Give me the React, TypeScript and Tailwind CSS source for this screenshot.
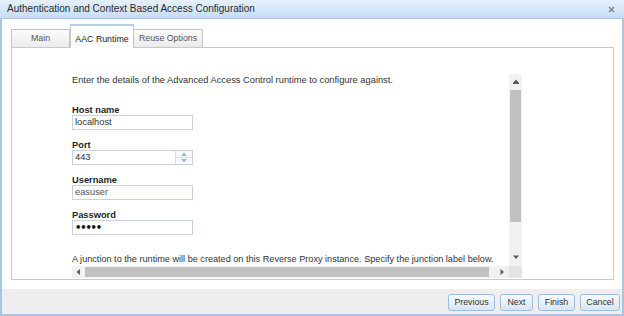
import { ReactNode } from 'react';

function Arrow({ dir }: { dir: 'up' | 'down' | 'left' | 'right' }) {
  const pts = {
    up: '1,5 4,1.5 7,5',
    down: '1,1.5 4,5 7,1.5',
    left: '5,1 1.5,4 5,7',
    right: '1.5,1 5,4 1.5,7',
  }[dir];
  return (
    <svg width="8" height="8" viewBox="0 0 8 8">
      <polygon points={pts} fill="#5a5a5a" />
      {dir === 'up' && <rect x="1" y="5" width="6" height="1" fill="#5a5a5a" />}
    </svg>
  );
}

function Field({ label, children }: { label: string; children: ReactNode }) {
  return (
    <div className="mt-[10px]">
      <div className="font-bold text-[#1f1f1f] leading-[10px] h-[10px]">{label}</div>
      {children}
    </div>
  );
}

function TextBox({ value, className = '' }: { value: string; className?: string }) {
  return (
    <div className={`w-[121px] h-[15px] border border-[#c9d1da] bg-white pl-[2px] leading-[13px] ${className}`}>
      {value}
    </div>
  );
}

function Btn({ label, w }: { label: string; w: string }) {
  return (
    <button className={`${w} h-[17px] rounded-[3px] border border-[#9fbde0] bg-gradient-to-b from-[#f7fbff] to-[#d5e6f8] text-[8.8px] text-[#333] leading-none`}>
      {label}
    </button>
  );
}

export default function App() {
  return (
    <div className="w-[624px] h-[316px] flex flex-col bg-white font-['Liberation_Sans',Arial,sans-serif] text-[#333] overflow-hidden">
      {/* title bar */}
      <div className="h-[19px] shrink-0 flex items-center justify-between pl-[7px] pr-[8px] bg-gradient-to-b from-[#e6f0fb] to-[#c6ddf6] border-b border-[#a9c5e4]">
        <span className="text-[10px] text-[#2b2b2b] leading-none">Authentication and Context Based Access Configuration</span>
        <svg width="7" height="7" viewBox="0 0 7 7" className="mr-[1px]">
          <path d="M1 1 L6 6 M6 1 L1 6" stroke="#8a8a8a" strokeWidth="1.6" />
        </svg>
      </div>

      <div className="flex-1 flex flex-col border-x-2 border-b-2 border-[#a9c5e4]">
        {/* tabs */}
        <div className="flex items-end pl-[9px] pt-[5px] h-[28px] shrink-0 text-[8.8px] leading-none">
          <div className="w-[59px] h-[18px] flex items-center justify-center border border-b-0 border-[#c6c6c6] bg-gradient-to-b from-[#fbfbfb] to-[#ececec] text-[#555]">
            Main
          </div>
          <div className="relative z-10 w-[64px] h-[24px] -mb-px flex items-center justify-center pt-[4px] border border-b-0 border-[#c6c6c6] border-t-[#b7cde6] border-t-2 bg-white text-[#222]">
            AAC Runtime
          </div>
          <div className="w-[69px] h-[18px] flex items-center justify-center border border-b-0 border-l-0 border-[#c6c6c6] bg-gradient-to-b from-[#fbfbfb] to-[#ececec] text-[#555]">
            Reuse Options
          </div>
        </div>

        {/* panel */}
        <div className="ml-[9px] mr-[8px] h-[233px] shrink-0 border border-[#c9c9c9] pl-[60px] pt-[26px]">
          <div className="grid grid-cols-[437px_13px] grid-rows-[192px_12px] w-[450px] text-[9.3px]">
            <div className="overflow-hidden whitespace-nowrap pt-[1px]">
              <div className="leading-[10px]">Enter the details of the Advanced Access Control runtime to configure against.</div>
              <div className="h-[10px]" />
              <Field label="Host name">
                <TextBox value="localhost" />
              </Field>
              <Field label="Port">
                <div className="w-[121px] h-[15px] border border-[#c9d1da] flex">
                  <div className="flex-1 pl-[2px] leading-[13px]">443</div>
                  <div className="w-[17px] flex flex-col border-l border-[#d6dde5]">
                    <div className="flex-1 flex items-center justify-center border-b border-[#d6dde5] bg-[#f6f8fa]">
                      <svg width="6" height="4" viewBox="0 0 6 4"><polygon points="0,4 3,0.5 6,4" fill="#9fb3c8" /></svg>
                    </div>
                    <div className="flex-1 flex items-center justify-center bg-[#f6f8fa]">
                      <svg width="6" height="4" viewBox="0 0 6 4"><polygon points="0,0 3,3.5 6,0" fill="#9fb3c8" /></svg>
                    </div>
                  </div>
                </div>
              </Field>
              <Field label="Username">
                <TextBox value="easuser" className="text-[#555]" />
              </Field>
              <Field label="Password">
                <div className="w-[121px] h-[15px] border border-[#c9d1da] bg-white pl-[2px] flex items-center">
                  <span className="font-['DejaVu_Sans',sans-serif] text-[10px] font-bold leading-none text-[#111] tracking-[-1.2px]">•••••</span>
                </div>
              </Field>
              <div className="mt-[19px] leading-[10px] text-[9.15px]">
                A junction to the runtime will be created on this Reverse Proxy instance. Specify the junction label below.
              </div>
            </div>

            {/* vertical scrollbar */}
            <div className="flex flex-col bg-[#f1f1f1]">
              <div className="h-[16px] flex items-center justify-center"><Arrow dir="up" /></div>
              <div className="h-[132px] bg-[#c1c1c1] mx-[1px]" />
              <div className="flex-1" />
              <div className="h-[16px] flex items-center justify-center"><Arrow dir="down" /></div>
            </div>

            {/* horizontal scrollbar */}
            <div className="flex bg-[#f1f1f1]">
              <div className="w-[13px] flex items-center justify-center"><Arrow dir="left" /></div>
              <div className="w-[404px] bg-[#c1c1c1] my-[1px]" />
              <div className="flex-1" />
              <div className="w-[13px] flex items-center justify-center"><Arrow dir="right" /></div>
            </div>
            <div className="bg-[#e4e4e4]" />
          </div>
        </div>

        <div className="flex-1" />

        {/* footer */}
        <div className="h-[25px] shrink-0 bg-[#eeeeee] flex items-center justify-end gap-[5px] pr-[2px] pt-[1px]">
          <Btn label="Previous" w="w-[47px]" />
          <Btn label="Next" w="w-[33px]" />
          <Btn label="Finish" w="w-[37px]" />
          <Btn label="Cancel" w="w-[40px]" />
        </div>
      </div>
    </div>
  );
}
